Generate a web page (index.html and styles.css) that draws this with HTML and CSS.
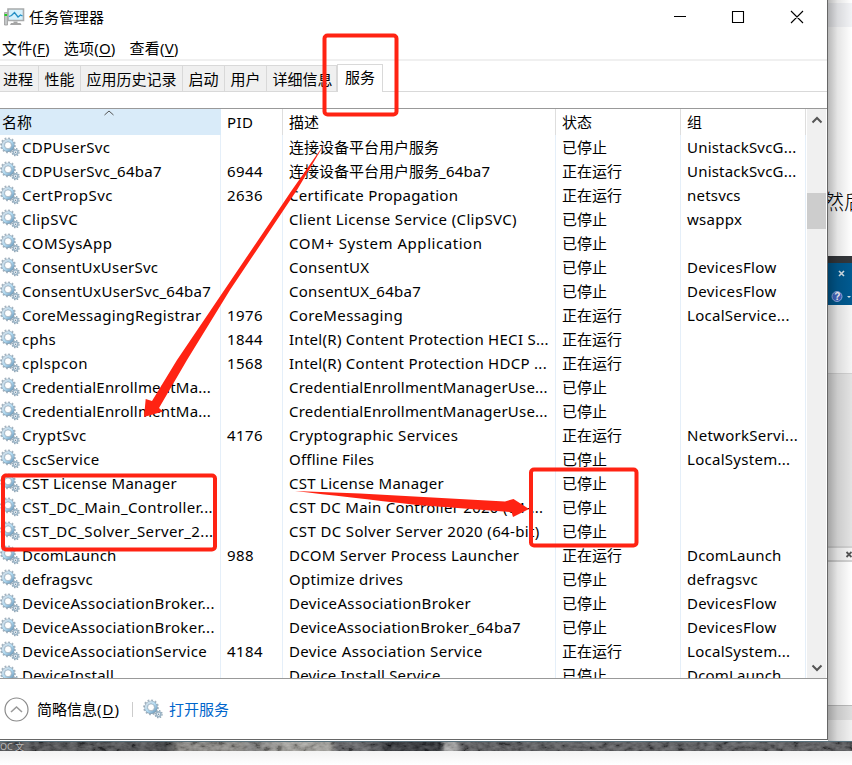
FILE: index.html
```html
<!DOCTYPE html>
<html lang="zh-CN">
<head>
<meta charset="utf-8">
<title>任务管理器</title>
<link rel="stylesheet" href="styles.css">
</head>
<body>
<svg class="defs" width="0" height="0" aria-hidden="true">
  <defs>
    <linearGradient id="metal" x1="0" y1="0" x2="1" y2="1"><stop offset="0" stop-color="#d3dde5"/><stop offset=".5" stop-color="#b5dcf3"/><stop offset="1" stop-color="#6f9cbd"/></linearGradient>
    <symbol id="gear" viewBox="0 0 20 20">
      <circle cx="8" cy="8.3" r="6.900" fill="none" stroke="#a3b3c0" stroke-width="2" stroke-dasharray="1.800 1.810"/>
      <circle cx="8" cy="8.3" r="4.9" fill="none" stroke="#8199aa" stroke-width="3.400"/>
      <circle cx="8" cy="8.3" r="4.9" fill="none" stroke="url(#metal)" stroke-width="2.600"/>
      <circle cx="8" cy="8.3" r="3.4" fill="#fff" stroke="#8ba3b5" stroke-width=".6"/>
      <circle cx="15.6" cy="15.2" r="3.5" fill="none" stroke="#8a9fae" stroke-width="1.300" stroke-dasharray="1.4 1.35"/>
      <circle cx="15.6" cy="15.2" r="2.3" fill="#fff" stroke="#9cb5c7" stroke-width="1.700"/>
      <circle cx="15.6" cy="15.2" r=".8" fill="#6f8a9f"/>
    </symbol>
  </defs>
</svg>
<div class="desktop">
  <main class="window">
    <header class="titlebar">
      <svg class="appicon" width="21" height="18" viewBox="0 0 21 18"><path d="M.5 4.500h3v12.500h-3z" fill="#c4c7c8" stroke="#999" stroke-width=".8"/><path d="M.5 6h3v2h-3z" fill="#20d020"/><path d="M4 1h15.500v11.500h-15.500z" fill="#d5f1fc" stroke="#a8aaab" stroke-width="1.600"/><path d="m5 8.500 2.500-1 3-3 3.500 4.500 2.500-2 2 1" fill="none" stroke="#238fc5" stroke-width="1.300"/><path d="M9.500 13.500h4v1.500h3l1 2H6l1-2h2.500z" fill="#a5a5a5"/></svg>
      <h1>任务管理器</h1>
      <svg class="controls" width="140" height="16" viewBox="0 0 140 16" fill="none" stroke="#000" stroke-width="1.1"><path d="M6 8.500h12M64.500 3.500h11v11h-11zM123 3l12 12M135 3 123 15"/></svg>
    </header>
    <nav class="menu"><span>文件(<u>F</u>)</span><span>选项(<u>O</u>)</span><span>查看(<u>V</u>)</span></nav>
    <div class="tabs"><span class="t1">进程</span><span class="t2">性能</span><span class="t3">应用历史记录</span><span class="t4">启动</span><span class="t5">用户</span><span class="t6">详细信息</span><span class="t7 active">服务</span></div>
    <section class="list">
      <div class="table">
        <div class="row head"><b>名称<svg class="sort" width="10" height="6" viewBox="0 0 10 6"><path d="m.5 5 4.500-4 4.500 4" fill="none" stroke="#555"/></svg></b><b>PID</b><b>描述</b><b>状态</b><b>组</b></div>
        <div class="row"><i><svg><use href="#gear"/></svg>CDPUserSvc</i><i></i><i class="cjk">连接设备平台用户服务</i><i>已停止</i><i class="snug">UnistackSvcG...</i></div>
        <div class="row"><i><svg><use href="#gear"/></svg>CDPUserSvc_64ba7</i><i>6944</i><i class="cjk">连接设备平台用户服务<span class="snug">_64ba7</span></i><i>正在运行</i><i class="snug">UnistackSvcG...</i></div>
        <div class="row"><i class="wide"><svg><use href="#gear"/></svg>CertPropSvc</i><i>2636</i><i>Certificate Propagation</i><i>正在运行</i><i class="snug">netsvcs</i></div>
        <div class="row"><i class="wide"><svg><use href="#gear"/></svg>ClipSVC</i><i></i><i class="loose">Client License Service (ClipSVC)</i><i>已停止</i><i>wsappx</i></div>
        <div class="row"><i class="wider"><svg><use href="#gear"/></svg>COMSysApp</i><i></i><i class="wider">COM+ System Application</i><i>已停止</i><i></i></div>
        <div class="row"><i class="snug"><svg><use href="#gear"/></svg>ConsentUxUserSvc</i><i></i><i>ConsentUX</i><i>已停止</i><i class="loose">DevicesFlow</i></div>
        <div class="row"><i><svg><use href="#gear"/></svg>ConsentUxUserSvc_64ba7</i><i></i><i>ConsentUX_64ba7</i><i>已停止</i><i class="loose">DevicesFlow</i></div>
        <div class="row"><i><svg><use href="#gear"/></svg>CoreMessagingRegistrar</i><i>1976</i><i class="loose">CoreMessaging</i><i>正在运行</i><i>LocalService...</i></div>
        <div class="row"><i><svg><use href="#gear"/></svg>cphs</i><i>1844</i><i>Intel(R) Content Protection HECI S...</i><i>正在运行</i><i></i></div>
        <div class="row"><i class="wide"><svg><use href="#gear"/></svg>cplspcon</i><i>1568</i><i>Intel(R) Content Protection HDCP ...</i><i>正在运行</i><i></i></div>
        <div class="row"><i class="snug"><svg><use href="#gear"/></svg>CredentialEnrollmentMa...</i><i></i><i class="snug">CredentialEnrollmentManagerUse...</i><i>已停止</i><i></i></div>
        <div class="row"><i class="snug"><svg><use href="#gear"/></svg>CredentialEnrollmentMa...</i><i></i><i class="snug">CredentialEnrollmentManagerUse...</i><i>已停止</i><i></i></div>
        <div class="row"><i class="wide"><svg><use href="#gear"/></svg>CryptSvc</i><i>4176</i><i class="loose">Cryptographic Services</i><i>正在运行</i><i>NetworkServi...</i></div>
        <div class="row"><i class="loose"><svg><use href="#gear"/></svg>CscService</i><i></i><i class="snug">Offline Files</i><i>已停止</i><i>LocalSystem...</i></div>
        <div class="row"><i><svg><use href="#gear"/></svg>CST License Manager</i><i></i><i>CST License Manager</i><i>已停止</i><i></i></div>
        <div class="row"><i class="loose"><svg><use href="#gear"/></svg>CST_DC_Main_Controller...</i><i></i><i>CST DC Main Controller 2020 (64-...</i><i>已停止</i><i></i></div>
        <div class="row"><i class="loose"><svg><use href="#gear"/></svg>CST_DC_Solver_Server_2...</i><i></i><i class="loose">CST DC Solver Server 2020 (64-bit)</i><i>已停止</i><i></i></div>
        <div class="row"><i class="snug"><svg><use href="#gear"/></svg>DcomLaunch</i><i>988</i><i>DCOM Server Process Launcher</i><i>正在运行</i><i class="snug">DcomLaunch</i></div>
        <div class="row"><i><svg><use href="#gear"/></svg>defragsvc</i><i></i><i>Optimize drives</i><i>已停止</i><i>defragsvc</i></div>
        <div class="row"><i class="loose"><svg><use href="#gear"/></svg>DeviceAssociationBroker...</i><i></i><i class="loose">DeviceAssociationBroker</i><i>已停止</i><i class="loose">DevicesFlow</i></div>
        <div class="row"><i class="loose"><svg><use href="#gear"/></svg>DeviceAssociationBroker...</i><i></i><i>DeviceAssociationBroker_64ba7</i><i>已停止</i><i class="loose">DevicesFlow</i></div>
        <div class="row"><i class="loose"><svg><use href="#gear"/></svg>DeviceAssociationService</i><i>4184</i><i class="loose">Device Association Service</i><i>正在运行</i><i>LocalSystem...</i></div>
        <div class="row"><i class="snug"><svg><use href="#gear"/></svg>DeviceInstall</i><i></i><i class="snug">Device Install Service</i><i>已停止</i><i class="snug">DcomLaunch</i></div>
      </div>
      <div class="scrollbar">
        <svg width="12" height="8" viewBox="0 0 12 8"><path d="m1.500 6.500 4.500-4.500 4.500 4.500" fill="none" stroke="#555" stroke-width="2"/></svg>
        <div class="thumb"></div>
        <svg class="down" width="12" height="8" viewBox="0 0 12 8"><path d="m1.500 1.500 4.500 4.500 4.500-4.500" fill="none" stroke="#555" stroke-width="2"/></svg>
      </div>
    </section>
    <footer class="footer">
      <svg width="25" height="25" viewBox="0 0 25 25" fill="none"><circle cx="12.500" cy="12.500" r="11.500" stroke="#8b8b8b" stroke-width="1.200"/><path d="m7 15 5.500-5 5.500 5" stroke="#999" stroke-width="1.600"/></svg>
      <span class="brief">简略信息<span>(<u>D</u>)</span></span>
      <span class="sep"></span>
      <svg class="fgear" width="20" height="20"><use href="#gear"/></svg>
      <a>打开服务</a>
    </footer>
  </main>
  <aside class="behind">
    <div class="b-top"></div>
    <div class="b-doc">然后</div>
    <div class="b-rock"></div>
    <div class="b-blue"><svg width="24" height="42" viewBox="0 0 24 42"><path d="m11 8 5 5m0-5-5 5" stroke="#d7e3ea" stroke-width="1.600"/><circle cx="9" cy="33.500" r="5" fill="#4268c5" stroke="#96b2e5"/><text x="6.200" y="37" class="q">?</text><path d="m19 33h4l-2 2z" fill="#d7e3ea"/></svg></div>
    <div class="b-light"></div>
    <div class="b-grey"></div>
    <div class="b-close"><svg width="24" height="14" viewBox="0 0 24 14"><path d="m18.500 4 5 5m0-5-5 5" stroke="#555" stroke-width="1.800"/></svg></div>
    <div class="b-white"></div>
    <div class="b-status"></div>
    <div class="b-foot"></div>
  </aside>
</div>
<div class="rock">
  <svg width="852" height="9"><filter id="grain" x="0" y="0" width="100%" height="100%"><feTurbulence type="fractalNoise" baseFrequency=".13 .22" numOctaves="3" seed="4"/><feColorMatrix values="1 0 0 0 -.25 1 0 0 0 -.25 1 0 0 0 -.25 0 0 0 0 .35"/></filter><rect width="852" height="9" filter="url(#grain)"/></svg>
  <span>OC 文</span>
</div>
<div class="below"></div>
<svg class="marks" width="852" height="765" viewBox="0 0 852 765">
  <g fill="none" stroke="#ff2313" stroke-width="4"><rect x="324.500" y="35.500" width="72" height="79" rx="3"/><rect x="3" y="475.500" width="212" height="74" rx="3"/><rect x="531" y="469.500" width="105.500" height="76" rx="3"/></g>
  <path fill="#ff2313" d="M325 143 292 190 177 360 152 401l-6.300-2L144 417l19-5.500-4-3.500 28-48L230 290 297 190zM295 491l65 2.500 145 8 8.500-2.500 15.500 10-16 8-1.500-5-94.500-7q-70-8-122-14z"/>
</svg>
</body>
</html>
```
FILE: styles.css
```css
* { box-sizing: border-box; }
body { margin: 0; width: 852px; height: 765px; overflow: hidden; background: #fff; color: #000; font: 15px/24px "Noto Sans", "Noto Sans CJK SC", sans-serif; }
.defs, .marks { position: absolute; top: 0; left: 0; }
.desktop { display: flex; height: 741px; }
.window { display: flex; flex-direction: column; width: 828px; height: 740px; background: #fff; border-right: 1px solid #666; border-bottom: 1px solid #666; flex: none; }
.titlebar { display: flex; align-items: center; height: 36px; padding: 0 0 2px 4px; }
h1 { font: inherit; margin: 0 0 0 4px; flex: 1; }
.controls { margin: 0 19px 2px 0; }
.menu { display: flex; gap: 14px; height: 25px; padding-left: 2px; border-bottom: 2px solid #f0f0f0; letter-spacing: .2px; }
u { text-underline-offset: 2px; text-decoration-thickness: 1px; }
.tabs { display: flex; align-items: flex-end; height: 31px; border-bottom: 1px solid #d9d9d9; }
.tabs span { height: 26px; line-height: 26px; background: #f0f0f0; border: solid #d9d9d9; border-width: 1px 1px 0 0; text-align: center; flex: none; white-space: nowrap; }
.tabs .t1 { width: 39px; text-align: left; padding-left: 3px; }
.tabs .t2 { width: 42px; }
.tabs .t3 { width: 102px; }
.tabs .t4, .tabs .t5 { width: 42px; }
.tabs .t6 { width: 70px; padding-left: 2px; }
.tabs .active { width: 46px; height: 28px; line-height: 25px; background: #fff; border-left-width: 1px; margin-bottom: -1px; }
.list { display: flex; height: 571px; margin-top: 16px; border: solid #999; border-width: 1px 0; overflow: hidden; }
.table { width: 807px; flex: none; }
.row { display: grid; grid-template-columns: 221px 62px 273px 125px 125px; height: 24px; }
.row > * { border-right: 1px solid #e5eff9; padding-left: 6px; font-style: normal; font-weight: 400; white-space: nowrap; overflow: hidden; height: 24px; letter-spacing: .28px; }
.row > :nth-child(2) { letter-spacing: .4px; }
.row > :nth-child(4), .row > .cjk, .head > * { letter-spacing: 0; }
.row .snug { letter-spacing: .2px; }
.row .loose { letter-spacing: .36px; }
.row .wide { letter-spacing: .46px; }
.row .wider { letter-spacing: .55px; }
.row > :first-child { display: flex; padding-left: 0; }
.row i svg { width: 20px; height: 20px; margin: 2px 2px 0 0; flex: none; }
.head, .head > * { height: 26px; line-height: 26px; }
.head > * { border-color: #dedede; }
.head > :first-child { background: #d9ebf9; padding-left: 2px; border-color: #d9ebf9; }
.sort { margin: 1px 0 0 72px; }
.scrollbar { display: flex; flex-direction: column; align-items: center; width: 19px; background: #f0f0f0; padding: 7px 0 6px; }
.thumb { width: 19px; height: 36px; margin-top: 69px; background: #cdcdcd; }
.down { margin-top: auto; }
.footer { display: flex; align-items: center; height: 60px; padding-left: 4px; }
.brief { margin-left: 8px; }
.brief span { letter-spacing: 1px; }
.sep { width: 1px; height: 15px; background: #ccc; margin: 0 10px 0 12px; }
.footer a { color: #0066cc; margin-left: 6px; }
.behind { position: relative; width: 24px; overflow: hidden; }
.behind::after { content: ""; position: absolute; inset: 0; background: linear-gradient(90deg, rgba(0,0,0,.28), rgba(0,0,0,.1) 40%, transparent); }
.b-top { height: 27px; background: #f2f3f6; border-top: 3px solid #fff; }
.b-doc { height: 229px; padding: 159px 0 0; font: 300 21px/28px "Noto Sans CJK SC", sans-serif; white-space: nowrap; text-indent: -5px; }
.b-rock { height: 7px; background: #34373b; }
.b-blue { height: 42px; background: #005a91; }
.b-blue svg { display: block; }
.q { font: bold 10px "Liberation Sans", sans-serif; fill: #fff; }
.b-light { height: 68px; background: #f5f5f5; }
.b-grey { height: 175px; background: #e3e3e3; border: solid #d2d2d2; border-width: 1px 0 2px; }
.b-close { height: 14px; background: #f5f5f5; border-bottom: 2px solid #d2d2d2; }
.b-close svg { display: block; }
.b-white { height: 143px; background: #fff; }
.b-status { height: 15px; background: #dedede; border-top: 1px solid #bbb; }
.b-foot { height: 21px; background: #f1f1f1; }
.rock { display: grid; height: 10px; overflow: hidden; border-top: 1px solid #58717d; color: #bbb; font-size: 9px; line-height: 9px; background: linear-gradient(90deg, #3c3e41 0 155px, #1b1e21 165px, #8c8984 180px 240px, #777 250px, #aaa8a2 285px 330px, #55565a 337px 365px, #14181e 390px 440px, #aaa 445px 455px, #4a4b4f 462px); }
.rock > * { grid-area: 1 / 1; }
.rock span { position: relative; }
.below { height: 14px; background: linear-gradient(#f2f2f2, #fff); }
```
